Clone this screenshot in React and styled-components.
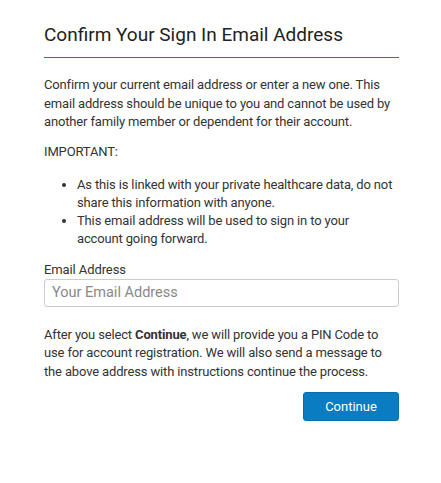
import React from "react";
import styled, { createGlobalStyle } from "styled-components";

const Global = createGlobalStyle`
  html, body { margin: 0; padding: 0; background: #fff; }
  body { font-family: Roboto, "Liberation Sans", Arial, sans-serif; color: #333; }
  * { box-sizing: border-box; }
`;

const Page = styled.div`
  width: 441px;
  padding: 22px 42px 0 44px;
`;

const Title = styled.h1`
  margin: 0;
  font-size: 19px;
  font-weight: 400;
  line-height: 26px;
  color: #222;
  padding-bottom: 9px;
  border-bottom: 1px solid #0a7cc2;
`;

const Text = styled.p`
  margin: ${(p) => p.$mt || "12px"} 0 0;
  font-size: 13px;
  line-height: 18.6px;
  letter-spacing: -0.15px;
  color: #333;
`;

const List = styled.ul`
  margin: 15px 0 0;
  padding: 0 5px 0 33px;
  font-size: 13px;
  line-height: 17.8px;
  letter-spacing: -0.15px;
  color: #333;
`;

const Field = styled.div`
  margin-top: 13px;
  display: flex;
  flex-direction: column;
  gap: 0;
`;

const Label = styled.label`
  font-size: 13px;
  line-height: 18px;
  letter-spacing: -0.1px;
  color: #333;
`;

const Input = styled.input`
  height: 28px;
  width: 100%;
  border: 1px solid #ccc;
  border-radius: 3px;
  padding: 0 7px;
  font-family: inherit;
  font-size: 14.5px;
  color: #333;
  &::placeholder { color: #888; }
  outline: none;
`;

const Actions = styled.div`
  display: flex;
  justify-content: flex-end;
  margin-top: 11px;
`;

const Button = styled.button`
  width: 96px;
  height: 29px;
  border: 1px solid #086fae;
  border-radius: 3px;
  background: #0a7cc2;
  color: #fff;
  font-family: inherit;
  font-size: 13px;
  cursor: pointer;
`;

export default function App() {
  return (
    <>
      <Global />
      <Page>
        <Title>Confirm Your Sign In Email Address</Title>
        <Text $mt="18px">
          Confirm your current email address or enter a new one. This email
          address should be unique to you and cannot be used by another family
          member or dependent for their account.
        </Text>
        <Text $mt="11px">IMPORTANT:</Text>
        <List>
          <li>
            As this is linked with your private healthcare data, do not share
            this information with anyone.
          </li>
          <li>
            This email address will be used to sign in to your account going
            forward.
          </li>
        </List>
        <Field>
          <Label htmlFor="email">Email Address</Label>
          <Input id="email" type="email" placeholder="Your Email Address" />
        </Field>
        <Text $mt="19px">
          After you select <b>Continue</b>, we will provide you a PIN Code to use
          for account registration. We will also send a message to the above
          address with instructions continue the process.
        </Text>
        <Actions>
          <Button>Continue</Button>
        </Actions>
      </Page>
    </>
  );
}
